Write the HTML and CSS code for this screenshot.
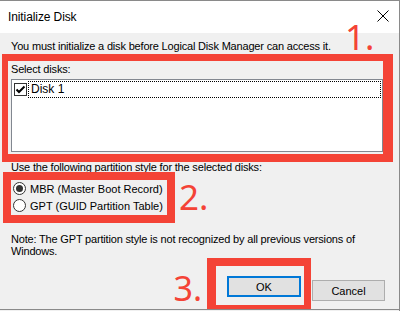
FILE: index.html
```html
<!DOCTYPE html>
<html>
<head>
<meta charset="utf-8">
<link rel="stylesheet" href="styles.css">
</head>
<body>
<div class="window">
  <div class="titlebar">
    <span class="title">Initialize Disk</span>
    <svg class="close" width="12" height="12" viewBox="0 0 12 12"><path d="M0.5 0.5L11.5 11.5M11.5 0.5L0.5 11.5" stroke="#000" stroke-width="1" fill="none"/></svg>
  </div>
  <div class="content">
    <p class="intro">You must initialize a disk before Logical Disk Manager can access it.</p>
    <span class="mark mark1">1.</span>
    <div class="hl hl1">
      <div class="label">Select disks:</div>
      <div class="listbox">
        <div class="item">
          <span class="check"><svg width="11" height="11" viewBox="0 0 11 11"><path d="M1.5 5.5L4 8L9.5 2.5" stroke="#000" stroke-width="2" fill="none"/></svg></span>
          <span class="focus">Disk 1</span>
        </div>
      </div>
    </div>
    <p class="style-label">Use the following partition style for the selected disks:</p>
    <div class="radio-row">
      <div class="hl hl2">
        <label class="radio"><span class="dot on"></span>MBR (Master Boot Record)</label>
        <label class="radio"><span class="dot"></span>GPT (GUID Partition Table)</label>
      </div>
      <span class="mark">2.</span>
    </div>
    <p class="note">Note: The GPT partition style is not recognized by all previous versions of Windows.</p>
    <div class="buttons">
      <span class="mark mark3">3.</span>
      <div class="hl hl3"><button class="btn ok">OK</button></div>
      <button class="btn">Cancel</button>
    </div>
  </div>
</div>
</body>
</html>
```
FILE: styles.css
```css
* { box-sizing: border-box; }
html, body { margin: 0; padding: 0; background: #f0f0f0; }
.window {
  width: 400px;
  height: 311px;
  border-top: 1px solid #8a8a8a;
  border-right: 1px solid #8a8a8a;
  display: flex;
  flex-direction: column;
  font-family: "Liberation Sans", Arial, sans-serif;
  font-size: 11px;
  color: #000;
}
.titlebar {
  height: 32px;
  background: #fff;
  display: flex;
  align-items: center;
  justify-content: space-between;
  padding: 0 10px 0 8px;
}
.title { font-size: 12px; letter-spacing: -0.1px; }
.close { display: block; margin-bottom: 2px; }
.content {
  flex: 1;
  position: relative;
  background: #f0f0f0;
  border-bottom: 1px solid #8a8a8a;
  margin-bottom: 1px;
  letter-spacing: -0.18px;
}
p { margin: 0; }
.intro { padding: 7px 0 0 11px; line-height: 13px; }
.mark {
  font-family: "Noto Sans", "DejaVu Sans", sans-serif;
  font-size: 35px;
  line-height: 35px;
  color: #f44336;
  font-weight: 400;
  letter-spacing: 0;
}
.mark1 { position: absolute; left: 345px; top: -14px; }
.hl { border: 8px solid #f44336; }
.hl1 {
  margin: 1px 0 0 2px;
  width: 391px;
  border-width: 7px 10px 8px 6px;
  padding: 2px 0 2px 3px;
}
.label { line-height: 13px; margin-bottom: 3px; }
.listbox {
  height: 73px;
  background: #fff;
  border: 1px solid #828790;
  padding: 1px;
}
.item { display: flex; align-items: center; height: 17px; }
.check {
  width: 13px; height: 13px;
  border: 1px solid #333;
  background: #fff;
  display: flex; align-items: center; justify-content: center;
  margin: 0 1px 0 1px;
}
.check svg { display: block; }
.focus {
  flex: 1;
  height: 17px;
  border: 1px dotted #000;
  padding-left: 2px;
  font-size: 12px;
  line-height: 15px;
  letter-spacing: 0;
}
.style-label { padding-left: 11px; line-height: 10px; height: 10px; }
.radio-row { display: flex; align-items: center; }
.hl2 {
  margin-left: 3px;
  width: 172px;
  padding: 0 0 1px 2px;
}
.radio-row .mark { margin-left: 4px; margin-top: -2px; }
.radio { display: flex; align-items: center; height: 17px; letter-spacing: 0; }
.dot {
  width: 13px; height: 13px;
  border: 1px solid #333;
  border-radius: 50%;
  background: #fff;
  margin-right: 4px;
  position: relative;
}
.dot.on::after {
  content: "";
  position: absolute;
  left: 2px; top: 2px;
  width: 7px; height: 7px;
  border-radius: 50%;
  background: #333;
}
.note { padding: 10px 14px 0 11px; line-height: 12px; }
.buttons {
  display: flex;
  justify-content: flex-end;
  align-items: flex-end;
  margin-top: 1px;
  padding-right: 14px;
}
.buttons .mark3 { margin-right: 5px; margin-bottom: 4px; font-size: 34px; line-height: 34px; }
.hl3 {
  border-width: 8px 7px 4px 9px;
  padding: 10px 3px 8px 11px;
  margin-right: 1px;
}
.btn {
  width: 73px;
  height: 21px;
  background: #e1e1e1;
  border: 1px solid #adadad;
  font-family: "Liberation Sans", Arial, sans-serif;
  font-size: 11px;
  color: #000;
  padding: 0;
  margin: 0 0 8px 0;
  display: block;
}
.hl3 .btn { margin: 0; width: 74px; }
.btn.ok { border: 2px solid #0078d7; }
```
